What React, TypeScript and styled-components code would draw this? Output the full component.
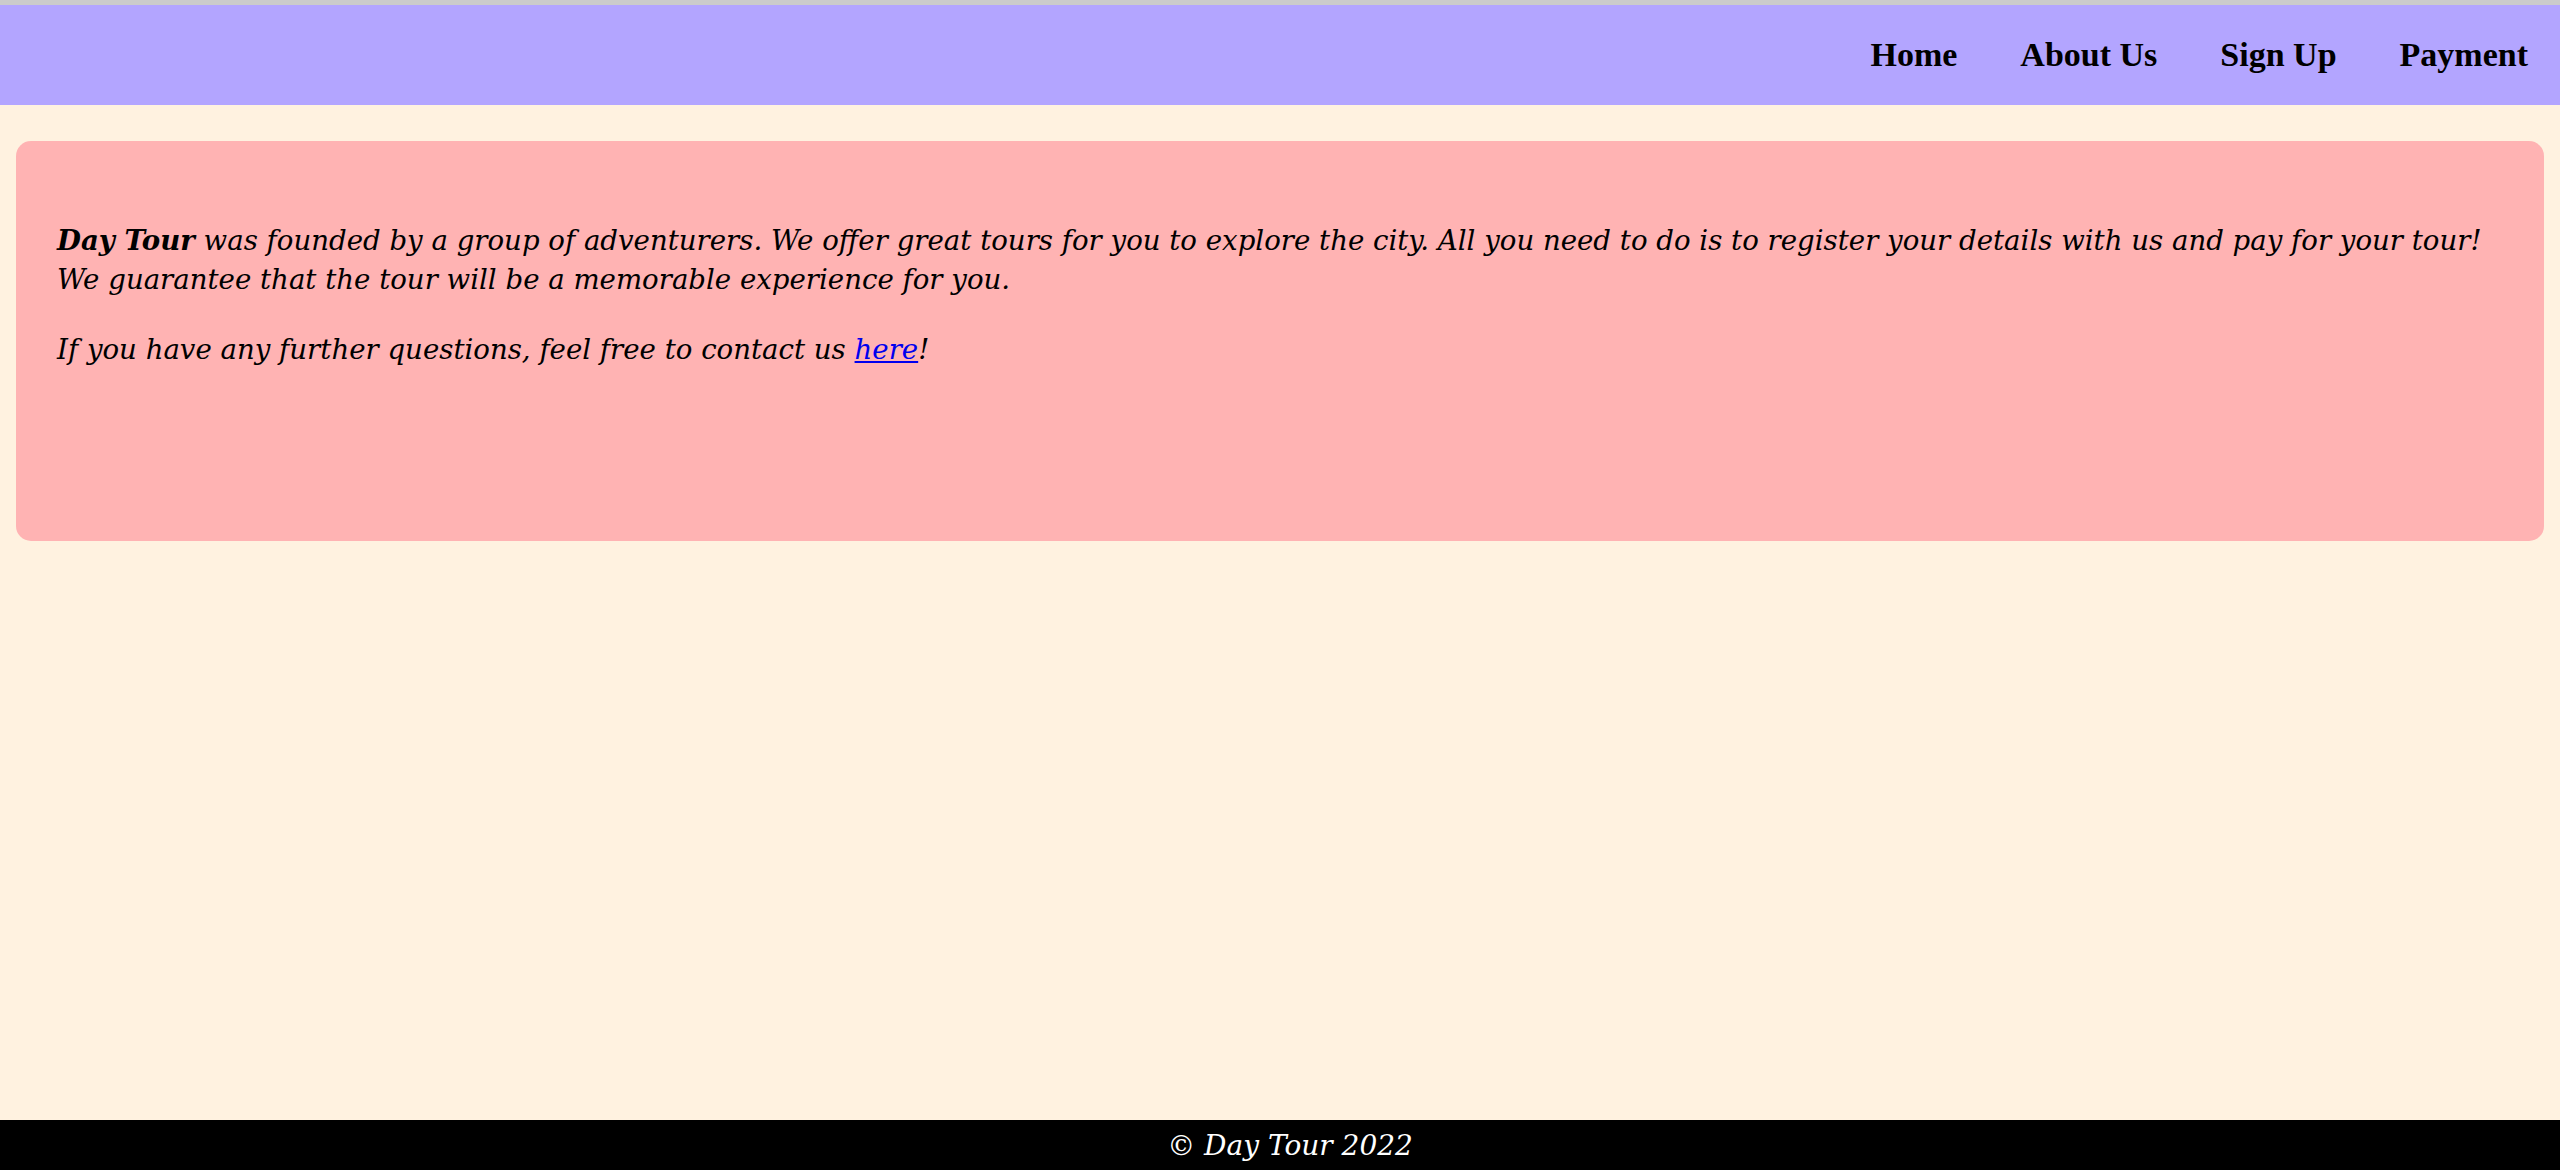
import * as React from 'react';
import styled, { createGlobalStyle } from 'styled-components';

const GlobalStyle = createGlobalStyle`
  html, body {
    margin: 0;
    padding: 0;
  }

  body {
    background: #fff2e0;
    font-family: 'DejaVu Serif', 'Liberation Serif', serif;
  }

  * {
    box-sizing: border-box;
  }
`;

const Page = styled.div`
  min-height: 100vh;
  display: flex;
  flex-direction: column;
`;

const NavBar = styled.nav`
  height: 105px;
  border-top: 5px solid #cbcbcb;
  background: #b3a5ff;
  display: flex;
  flex-direction: row;
  justify-content: flex-end;
  align-items: center;
  gap: 63px;
  padding-right: 32px;
`;

const NavLink = styled.a`
  font-family: 'Liberation Serif', 'Times New Roman', serif;
  font-weight: bold;
  font-size: 34px;
  color: #000;
  text-decoration: none;
  cursor: pointer;
`;

const Main = styled.main`
  padding: 36px 16px 0;
`;

const InfoCard = styled.section`
  height: 400px;
  padding: 49px 41px 0;
  background: #ffb3b3;
  border-radius: 15px;
`;

const Paragraph = styled.p`
  margin: 31px 0;
  font-size: 27.6px;
  line-height: 39px;
  font-style: italic;
  color: #000;

  strong {
    font-weight: bold;
  }

  a {
    color: #0000ee;
    text-decoration: underline;
  }
`;

const Footer = styled.footer`
  margin-top: auto;
  height: 50px;
  padding-left: 20px;
  background: #000;
  color: #fff;
  display: flex;
  justify-content: center;
  align-items: center;
  font-size: 28px;
  font-style: italic;
`;

const links = ['Home', 'About Us', 'Sign Up', 'Payment'];

export default function App() {
  return (
    <>
      <GlobalStyle />
      <Page>
        <NavBar>
          {links.map((label) => (
            <NavLink key={label}>{label}</NavLink>
          ))}
        </NavBar>
        <Main>
          <InfoCard>
            <Paragraph>
              <strong>Day Tour</strong> was founded by a group of adventurers. We offer great tours for you
              to explore the city. All you need to do is to register your details with us and pay for your
              tour! We guarantee that the tour will be a memorable experience for you.
            </Paragraph>
            <Paragraph>
              If you have any further questions, feel free to contact us <a href="#contact">here</a>!
            </Paragraph>
          </InfoCard>
        </Main>
        <Footer>© Day Tour 2022</Footer>
      </Page>
    </>
  );
}
